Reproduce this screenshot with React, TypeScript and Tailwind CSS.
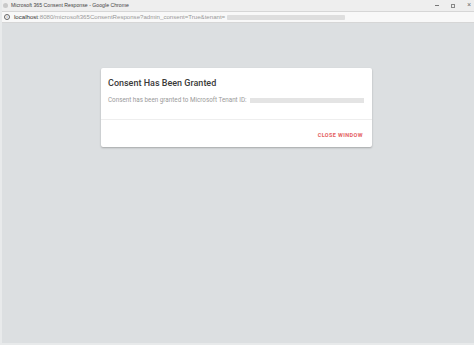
import React from "react";

const App = () => {
  return (
    <div
      className="w-[474px] h-[345px] flex flex-col bg-[#dcdfe1] overflow-hidden border-l-2 border-b-2 border-[#e8eaeb]"
      style={{ fontFamily: "Roboto, 'Liberation Sans', sans-serif" }}
    >
      {/* window title bar */}
      <div className="h-[11px] flex items-center bg-[#eeeeee] text-[#444] text-[5.2px] pl-[1px] pr-[3px]">
        <div className="w-[5px] h-[5px] rounded-full bg-[#c9c9c9] mr-[3px]" />
        <span style={{ fontFamily: "'Liberation Sans', sans-serif" }}>
          Microsoft 365 Consent Response - Google Chrome
        </span>
        <div className="ml-auto flex items-center gap-[12px] text-[#777] text-[7px]">
          <span className="w-[4px] h-[1px] bg-[#777]" />
          <span className="w-[4px] h-[4px] border border-[#888]" />
          <span className="leading-none">×</span>
        </div>
      </div>

      {/* address bar */}
      <div className="h-[12px] flex items-center bg-[#f8f8f8] border-y border-[#d6d6d6] pl-[2px] text-[6.1px]">
        <div className="w-[6px] h-[6px] rounded-full border border-[#666] mr-[4px] flex items-center justify-center text-[4px] text-[#555]">
          i
        </div>
        <span style={{ fontFamily: "'Liberation Sans', sans-serif" }}>
          <span className="text-[#333]">localhost</span>
          <span className="text-[#999]">
            :8080/microsoft365ConsentResponse?admin_consent=True&amp;tenant=
          </span>
        </span>
        <div className="ml-[2px] w-[118px] h-[5px] bg-[#dedede] rounded-[1px]" />
      </div>

      {/* page */}
      <div className="flex-1 flex justify-center pt-[45px] pr-[3px]">
        <div className="w-[271px] h-[79px] bg-white rounded-[2px] shadow-[0_1px_2px_rgba(0,0,0,0.25)] flex flex-col">
          <div className="px-[7px] pt-[10px] pb-[15px]">
            <div className="text-[9px] font-medium text-[#3a3a3a] leading-[11px]">
              Consent Has Been Granted
            </div>
            <div className="mt-[8px] flex items-center text-[6.3px] text-[#9a9a9a] leading-[7px]">
              <span>Consent has been granted to Microsoft Tenant ID:</span>
              <div className="ml-[3px] w-[114px] h-[5px] bg-[#e4e4e4]" />
            </div>
          </div>
          <div className="border-t border-[#eeeeee] flex-1 flex items-end justify-end px-[9px] pb-[8px]">
            <span className="text-[5.5px] font-bold tracking-[0.4px] text-[#e46060]">
              CLOSE WINDOW
            </span>
          </div>
        </div>
      </div>
    </div>
  );
};

export default App;
